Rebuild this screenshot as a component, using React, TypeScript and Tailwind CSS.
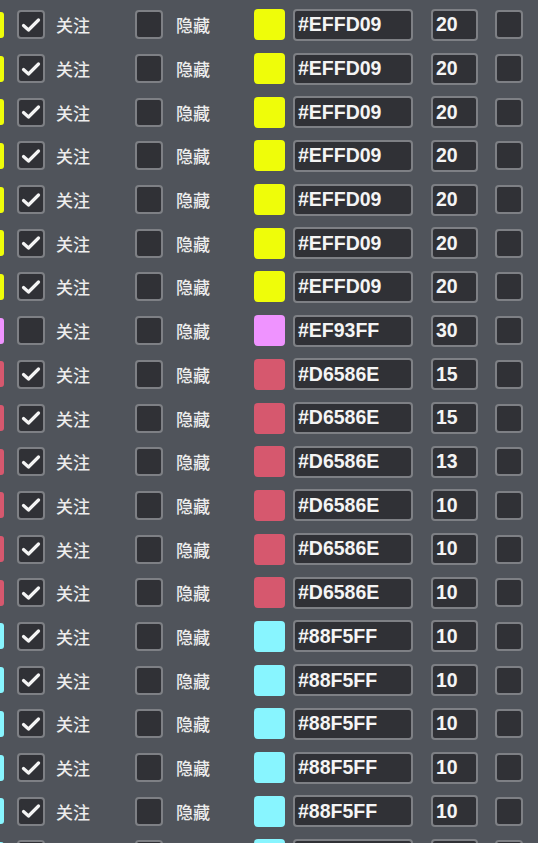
type Row = {
  color: string;
  size: number;
  follow: boolean;
};

const ROWS: Row[] = [
  ...Array.from({ length: 7 }, () => ({ color: "#EFFD09", size: 20, follow: true })),
  { color: "#EF93FF", size: 30, follow: false },
  { color: "#D6586E", size: 15, follow: true },
  { color: "#D6586E", size: 15, follow: true },
  { color: "#D6586E", size: 13, follow: true },
  { color: "#D6586E", size: 10, follow: true },
  { color: "#D6586E", size: 10, follow: true },
  { color: "#D6586E", size: 10, follow: true },
  ...Array.from({ length: 6 }, () => ({ color: "#88F5FF", size: 10, follow: true })),
];

function CheckBox({ checked, className = "" }: { checked: boolean; className?: string }) {
  return (
    <span
      className={`flex h-[29px] w-[28px] shrink-0 items-center justify-center rounded-[4px] border-2 border-[#7e8085] bg-[#303136] ${className}`}
    >
      {checked ? (
        <svg width="20" height="16" viewBox="0 0 20 16" aria-hidden>
          <path d="M2.5 8.5 L7.5 13 L17.5 3" fill="none" stroke="#f4f4f4" strokeWidth="3.2" strokeLinecap="round" strokeLinejoin="round" />
        </svg>
      ) : null}
    </span>
  );
}

function LayerRow({ row, last }: { row: Row; last: boolean }) {
  return (
    <div className="flex h-[43.7px] items-center">
      <span className="h-[26px] w-[4px] shrink-0 rounded-r-[3px]" style={{ backgroundColor: row.color }} />
      <CheckBox checked={row.follow} className="ml-[13px]" />
      <span className="ml-[11px] w-[79px] shrink-0 text-[17px] font-medium leading-none text-[#ededed]">{last ? "" : "关注"}</span>
      <CheckBox checked={false} />
      <span className="ml-[13px] w-[78px] shrink-0 text-[17px] font-medium leading-none text-[#ededed]">{last ? "" : "隐藏"}</span>
      <span className="h-[31px] w-[31px] shrink-0 rounded-[4px]" style={{ backgroundColor: row.color }} />
      <span className="ml-[8px] flex h-[32px] w-[120px] shrink-0 items-center rounded-[4px] border-2 border-[#7e8085] bg-[#303136] pl-[3px] font-['Liberation_Sans',Arial,sans-serif] text-[19.5px] font-bold text-[#f4f4f4]">
        {last ? "" : row.color}
      </span>
      <span className="ml-[18px] flex h-[32px] w-[47px] shrink-0 items-center rounded-[4px] border-2 border-[#7e8085] bg-[#303136] pl-[3px] font-['Liberation_Sans',Arial,sans-serif] text-[19.5px] font-bold text-[#f4f4f4]">
        {last ? "" : row.size}
      </span>
      <CheckBox checked={false} className="ml-[17px]" />
    </div>
  );
}

export default function App() {
  return (
    <div className="h-screen overflow-hidden bg-[#50545b] pt-[3px] font-['Noto_Sans_CJK_SC','Noto_Sans',sans-serif]">
      {ROWS.map((row, i) => (
        <LayerRow key={i} row={row} last={i === ROWS.length - 1} />
      ))}
    </div>
  );
}
